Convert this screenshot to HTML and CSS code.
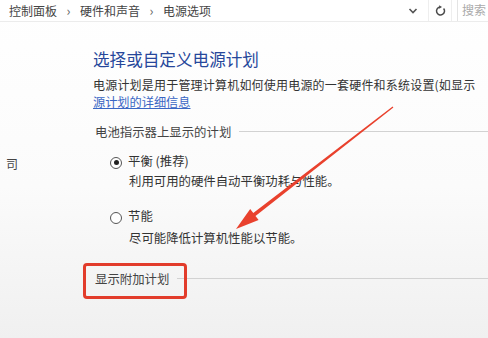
FILE: index.html
```html
<!DOCTYPE html>
<html lang="zh-CN">
<head>
<meta charset="utf-8">
<link rel="stylesheet" href="styles.css">
</head>
<body>
<div class="page">
  <header class="bar">
    <nav class="crumbs">
      <span>控制面板</span><span class="sep">›</span><span>硬件和声音</span><span class="sep">›</span><span>电源选项</span>
    </nav>
    <div class="tools">
      <svg class="chev" width="10" height="8" viewBox="0 0 10 8"><path d="M1.5 2 L5 5.5 L8.5 2" fill="none" stroke="#555" stroke-width="1.6"/></svg>
      <span class="refresh">
        <svg width="12" height="12" viewBox="0 0 12 12"><path d="M9.6 3.4 A4 4 0 1 1 6 2" fill="none" stroke="#4a4a4a" stroke-width="1.5"/><path d="M5.2 0.2 L8 2 L5.2 3.8 Z" fill="#4a4a4a"/></svg>
      </span>
      <span class="search">搜索</span>
    </div>
  </header>
  <div class="main">
    <aside class="side"><span class="cut">司</span></aside>
    <section class="content">
      <h1 class="title">选择或自定义电源计划</h1>
      <p class="desc">电源计划是用于管理计算机如何使用电源的一套硬件和系统设置(如显示<br><a class="link" href="#">源计划的详细信息</a></p>
      <div class="group">
        <span>电池指示器上显示的计划</span><span class="rule"></span>
      </div>
      <div class="option first">
        <span class="radio checked"></span><span>平衡 (推荐)</span>
      </div>
      <p class="note">利用可用的硬件自动平衡功耗与性能。</p>
      <div class="option second">
        <span class="radio"></span><span>节能</span>
      </div>
      <p class="note">尽可能降低计算机性能以节能。</p>
      <div class="group extra">
        <span>显示附加计划</span><span class="rule"></span>
      </div>
    </section>
  </div>
  <div class="mark"></div>
  <svg class="arrow" width="488" height="338" viewBox="0 0 488 338">
    <polygon points="393.4,107.5 255.5,215.9 258.6,220 236,229 250.2,209 253.3,213.1 392.6,106.5" fill="#e9412d"/>
  </svg>
</div>
</body>
</html>
```

FILE: styles.css
```css
html, body {
  margin: 0;
  padding: 0;
}
body {
  width: 488px;
  height: 338px;
  overflow: hidden;
  font-family: "Noto Sans CJK SC", "Noto Sans", sans-serif;
  color: #333;
  background: linear-gradient(180deg, #ffffff 0%, #fbfbfb 55%, #f0f0f0 100%);
}
.page {
  position: relative;
  width: 488px;
  height: 338px;
}
.bar {
  display: flex;
  align-items: center;
  justify-content: space-between;
  height: 21px;
  border-bottom: 1px solid #ececec;
  font-size: 12px;
  background: #fff;
}
.crumbs {
  display: flex;
  align-items: center;
  padding-left: 9px;
  color: #444;
  line-height: 20px;
}
.sep {
  display: inline-block;
  width: 23px;
  text-align: center;
  color: #666;
  font-size: 13px;
}
.tools {
  display: flex;
  align-items: center;
  height: 21px;
}
.chev {
  margin-right: 10px;
}
.refresh {
  display: flex;
  align-items: center;
  justify-content: center;
  width: 22px;
  height: 21px;
  border-left: 1px solid #eee;
  border-right: 1px solid #eee;
}
.search {
  margin-left: 5px;
  width: 26px;
  height: 21px;
  padding-left: 4px;
  border-left: 1px solid #e4e4e4;
  color: #aaa;
  line-height: 20px;
  font-size: 12px;
  overflow: hidden;
  white-space: nowrap;
}
.main {
  display: grid;
  grid-template-columns: 93px 1fr;
}
.side {
  padding-top: 133px;
  padding-left: 6px;
  font-size: 12px;
  line-height: 17px;
  color: #444;
}
.content {
  padding-top: 27px;
  font-size: 12.4px;
  line-height: 17px;
  white-space: nowrap;
}
.title {
  margin: 0;
  font-size: 16.6px;
  line-height: 20px;
  font-weight: normal;
  color: #27479b;
}
.desc {
  margin: 7px 0 0;
  font-size: 12px;
  letter-spacing: 0.2px;
  color: #333;
}
.link {
  font-size: 12.2px;
  letter-spacing: 0;
  color: #3a66c4;
  text-decoration: underline;
}
.group {
  display: flex;
  align-items: center;
  margin-top: 13px;
  padding-left: 2px;
  color: #444;
}
.rule {
  flex: 1;
  height: 1px;
  margin-left: 8px;
  margin-top: -2px;
  background: #d2d2d2;
}
.option {
  display: flex;
  align-items: center;
  padding-left: 17px;
  color: #333;
}
.option.first {
  margin-top: 12px;
}
.option.second {
  margin-top: 18px;
}
.radio {
  box-sizing: border-box;
  width: 12px;
  height: 12px;
  margin-right: 6px;
  border: 1px solid #555;
  border-radius: 50%;
  background: #fff;
  position: relative;
  top: 1px;
}
.radio.checked::after {
  content: "";
  position: absolute;
  left: 2.5px;
  top: 2.5px;
  width: 5px;
  height: 5px;
  border-radius: 50%;
  background: #222;
}
.note {
  margin: 3px 0 0;
  padding-left: 36px;
  color: #333;
}
.option.second + .note {
  margin-top: 5px;
}
.group.extra {
  margin-top: 24px;
}
.mark {
  position: absolute;
  left: 83px;
  top: 263px;
  width: 98px;
  height: 30px;
  border: 3px solid #e23c2b;
  border-radius: 4px;
}
.arrow {
  position: absolute;
  left: 0;
  top: 0;
  pointer-events: none;
}
```
